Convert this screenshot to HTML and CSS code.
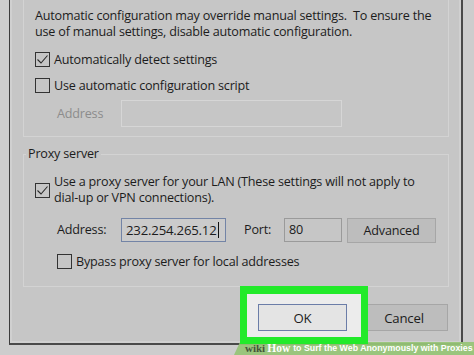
FILE: index.html
```html
<!DOCTYPE html>
<html>
<head>
<meta charset="utf-8">
<link rel="stylesheet" href="styles.css">
</head>
<body>
<div class="screen">
  <div class="window">
    <fieldset class="group group-auto">
      <p class="note">Automatic configuration may override manual settings.&nbsp; To ensure the<br>use of manual settings, disable automatic configuration.</p>
      <div class="check row-a1">
        <span class="box"><svg viewBox="0 0 15 15" width="15" height="15"><polyline points="2.5,7.5 6,11 12.5,3.5" fill="none" stroke="#2a2a2a" stroke-width="1.1"/></svg></span>
        <span>Automatically detect settings</span>
      </div>
      <div class="check row-a2">
        <span class="box"></span>
        <span>Use automatic configuration script</span>
      </div>
      <div class="field-row disabled">
        <span class="field-label">Address</span>
        <span class="input input-disabled"></span>
      </div>
    </fieldset>

    <fieldset class="group group-proxy">
      <legend>Proxy server</legend>
      <div class="check check-multi">
        <span class="box"><svg viewBox="0 0 15 15" width="15" height="15"><polyline points="2.5,7.5 6,11 12.5,3.5" fill="none" stroke="#2a2a2a" stroke-width="1.1"/></svg></span>
        <span>Use a proxy server for your LAN (These settings will not apply to<br>dial-up or VPN connections).</span>
      </div>
      <div class="field-row proxy-row">
        <span class="field-label">Address:</span>
        <span class="input input-focus">232.254.265.12<span class="caret"></span></span>
        <span class="port-label">Port:</span>
        <span class="input input-port">80</span>
        <span class="btn btn-adv">Advanced</span>
      </div>
      <div class="check check-bypass">
        <span class="box"></span>
        <span>Bypass proxy server for local addresses</span>
      </div>
    </fieldset>

    <div class="buttons">
      <span class="btn btn-ok">OK</span>
      <span class="btn btn-cancel">Cancel</span>
    </div>
    <div class="highlight"></div>
  </div>
  <div class="watermark"><span class="wm-wiki">wiki</span><span class="wm-how">How</span><span class="wm-rest">to Surf the Web Anonymously with Proxies</span></div>
</div>
</body>
</html>
```
FILE: styles.css
```css
* { box-sizing: border-box; }
html, body { margin: 0; padding: 0; }
body {
  width: 474px;
  height: 355px;
  overflow: hidden;
  background: #cdcdcd;
  font-family: "Open Sans", "Noto Sans", sans-serif;
  font-size: 12.6px;
  letter-spacing: -0.2px;
  color: #1c1c1c;
}
.screen {
  position: relative;
  width: 474px;
  height: 355px;
}
.window {
  position: relative;
  margin-left: 9px;
  width: 454px;
  height: 345px;
  background: #c6c6c6;
  border-left: 1px solid #3c3c3c;
  border-right: 2px solid #4a4a4a;
  border-bottom: 2px solid #4a4a4a;
  box-shadow: inset 2px 0 0 #d0d0d0, inset -2px 0 0 #d0d0d0, inset 0 -2px 0 #d0d0d0;
  padding: 0 12px 0 13px;
}
.group {
  margin: 0;
  border: 1px solid #d3d3d3;
  min-width: 0;
}
.group-auto {
  border-top: none;
  padding: 8px 12px 9px 11px;
}
.note {
  margin: 0;
  line-height: 16px;
  white-space: nowrap;
}
.check {
  display: flex;
  align-items: center;
  gap: 4px;
  height: 18px;
  white-space: nowrap;
}
.box {
  flex: none;
  width: 15px;
  height: 15px;
  border: 1px solid #333;
  display: flex;
  align-items: center;
  justify-content: center;
}
.box svg { display: block; margin: -1px; }
.row-a1 { margin-top: 10px; }
.row-a2 { margin-top: 8px; }
.field-row {
  display: flex;
  align-items: center;
  padding-left: 22px;
}
.disabled {
  margin-top: 6px;
  height: 27px;
  color: #8c8c8c;
}
.field-label { width: 64px; flex: none; }
.input {
  display: flex;
  align-items: center;
  flex: none;
  border: 1px solid #9a9a9a;
  padding-left: 4px;
  white-space: nowrap;
}
.input-disabled {
  width: 221px;
  height: 27px;
  border-color: #d6d6d6;
}
.group-proxy {
  margin-top: 9px;
  padding: 12px 12px 16px 11px;
}
.group-proxy legend {
  margin-left: -9px;
  padding: 0 2px;
  line-height: 16px;
}
.check-multi {
  height: auto;
  line-height: 16px;
  align-items: center;
}
.check-multi .box { margin-top: 1px; }
.proxy-row {
  margin-top: 11px;
  height: 25px;
}
.input-focus {
  width: 105px;
  height: 24px;
  border-color: #7384a6;
  background: #cbcbcb;
  font-size: 13.2px;
}
.caret {
  display: inline-block;
  width: 1px;
  height: 16px;
  background: #111;
  margin-left: 1px;
}
.port-label {
  margin-left: 18px;
  width: 41px;
}
.input-port {
  width: 58px;
  height: 24px;
  align-items: flex-start;
  padding-top: 2px;
}
.btn {
  display: flex;
  align-items: center;
  justify-content: center;
  flex: none;
  background: #bdbdbd;
  border: 1px solid #a6a6a6;
}
.btn-adv {
  margin-left: 5px;
  width: 89px;
  height: 25px;
  margin-top: 2px;
}
.check-bypass {
  margin-top: 10px;
  padding-left: 22px;
}
.buttons {
  display: flex;
  justify-content: flex-end;
  gap: 13px;
  margin-top: 17px;
  padding-right: 1px;
}
.btn-ok {
  position: relative;
  z-index: 3;
  width: 89px;
  height: 27px;
  background: #e4e4e4;
  border-color: #6b7da8;
  font-size: 13.2px;
}
.btn-cancel {
  width: 88px;
  height: 27px;
  font-size: 13.2px;
}
.highlight {
  position: absolute;
  z-index: 2;
  left: 230px;
  top: 286px;
  width: 128px;
  height: 58px;
  border: 7px solid #22ea2a;
  border-top-width: 8px;
  background: #ececec;
}
.watermark {
  position: absolute;
  right: 0;
  bottom: 0;
  width: 240px;
  height: 13px;
  background: rgba(150, 196, 118, 0.92);
  clip-path: polygon(6px 0, 100% 0, 100% 100%, 0 100%);
  display: flex;
  align-items: center;
  padding-left: 11px;
  white-space: nowrap;
  font-family: "Liberation Sans", sans-serif;
  font-weight: bold;
  letter-spacing: 0;
  color: #ffffff;
  line-height: 13px;
}
.wm-wiki {
  font-family: "Liberation Serif", serif;
  font-size: 11px;
  color: #45543a;
  margin-right: 2px;
}
.wm-how {
  font-family: "Liberation Serif", serif;
  font-size: 11.5px;
  margin-right: 3px;
}
.wm-rest {
  font-size: 8.8px;
}
```
